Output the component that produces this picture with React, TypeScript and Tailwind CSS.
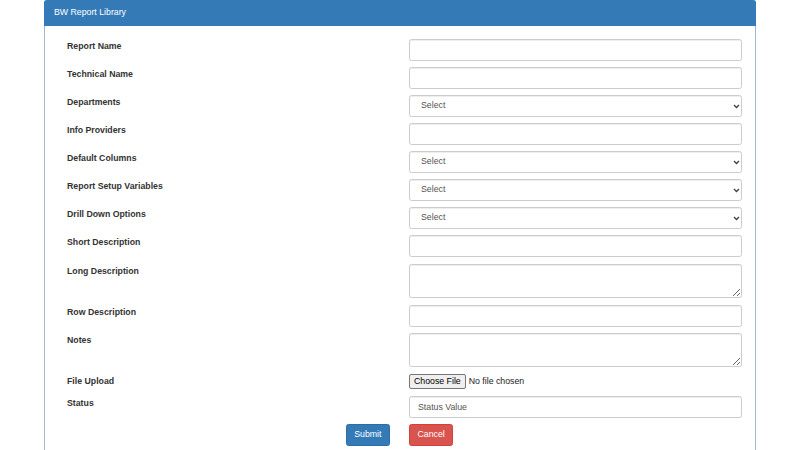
import type { ReactNode } from "react"

const fieldCls =
  "block w-full h-[22px] rounded-[2.5px] border border-[#cccccc] bg-white px-[8px] text-[8.75px] text-[#555555] shadow-[inset_0_1px_1px_rgba(0,0,0,0.075)] outline-none"

function Row({ label, children, className = "" }: { label: string; children: ReactNode; className?: string }) {
  return (
    <div className={`flex ${className}`}>
      <label className="w-[342px] shrink-0 pt-[1px] text-[8.75px] font-bold leading-[12.5px] text-[#333333]">
        {label}
      </label>
      <div className="w-[333px]">{children}</div>
    </div>
  )
}

function TextInput({ placeholder }: { placeholder?: string }) {
  return <input type="text" placeholder={placeholder} className={`${fieldCls} placeholder:text-[#555555]`} />
}

function SelectBox() {
  return (
    <div className="relative">
      <select className={`${fieldCls} appearance-none pl-[11px]`} defaultValue="">
        <option value="">Select</option>
      </select>
      <svg
        className="pointer-events-none absolute right-[2px] top-[9px] h-[5px] w-[7px]"
        viewBox="0 0 7 5"
        fill="none"
        stroke="#444"
        strokeWidth="1.4"
      >
        <path d="M1 1l2.5 2.5L6 1" />
      </svg>
    </div>
  )
}

function TextArea() {
  return (
    <textarea className="block h-[34px] w-full rounded-[2.5px] border border-[#cccccc] bg-white px-[8px] py-[4px] text-[8.75px] text-[#555555] shadow-[inset_0_1px_1px_rgba(0,0,0,0.075)] outline-none" />
  )
}

export default function App() {
  return (
    <div className="min-h-[450px] bg-white font-['Liberation_Sans',Arial,sans-serif]">
      <div className="mx-auto w-[712px] rounded-t-[3px] border border-t-0 border-[#a3b8cc] bg-white">
        {/* heading */}
        <div className="-mx-px flex h-[26px] items-center rounded-t-[3px] bg-[#337ab7] px-[10px] text-[8.75px] text-white">
          BW Report Library
        </div>

        {/* form */}
        <form className="pb-[10px] pl-[22px] pt-[13px]">
          <Row label="Report Name" className="mb-[6px]">
            <TextInput />
          </Row>
          <Row label="Technical Name" className="mb-[6px]">
            <TextInput />
          </Row>
          <Row label="Departments" className="mb-[6px]">
            <SelectBox />
          </Row>
          <Row label="Info Providers" className="mb-[6px]">
            <TextInput />
          </Row>
          <Row label="Default Columns" className="mb-[6px]">
            <SelectBox />
          </Row>
          <Row label="Report Setup Variables" className="mb-[6px]">
            <SelectBox />
          </Row>
          <Row label="Drill Down Options" className="mb-[6px]">
            <SelectBox />
          </Row>
          <Row label="Short Description" className="mb-[7px]">
            <TextInput />
          </Row>
          <Row label="Long Description" className="mb-[7px]">
            <TextArea />
          </Row>
          <Row label="Row Description" className="mb-[6px]">
            <TextInput />
          </Row>
          <Row label="Notes" className="mb-[7px]">
            <TextArea />
          </Row>
          <Row label="File Upload" className="mb-[7px]">
            <input
              type="file"
              className="block h-[15px] text-[8.75px] text-[#222222] file:mr-[3px] file:h-[15px] file:rounded-[2px] file:border file:border-[#767676] file:bg-[#efefef] file:px-[4px] file:text-[8.75px] file:text-black"
            />
          </Row>
          <Row label="Status" className="mb-[6px]">
            <TextInput placeholder="Status Value" />
          </Row>

          <div className="flex">
            <div className="flex w-[342px] justify-end pr-[19px]">
              <button
                type="button"
                className="h-[22px] rounded-[2.5px] border border-[#2e6da4] bg-[#337ab7] px-[7.5px] text-[8.75px] text-white"
              >
                Submit
              </button>
            </div>
            <button
              type="button"
              className="h-[22px] rounded-[2.5px] border border-[#d43f3a] bg-[#d9534f] px-[7.5px] text-[8.75px] text-white"
            >
              Cancel
            </button>
          </div>
        </form>
      </div>
    </div>
  )
}
